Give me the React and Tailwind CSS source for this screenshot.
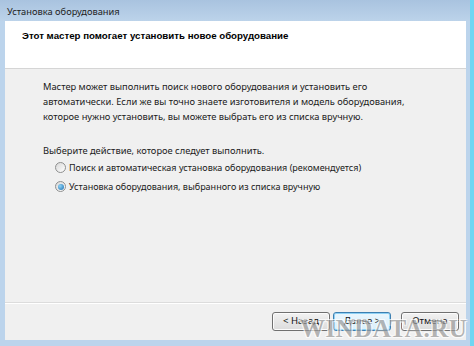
import React from "react";

function Radio({ checked }) {
  return (
    <span className="relative inline-flex h-[11px] w-[11px] shrink-0 items-center justify-center rounded-full border border-[#8e8f8f] bg-gradient-to-br from-[#d8d8d8] to-[#ffffff]">
      {checked && (
        <span className="h-[6px] w-[6px] rounded-full bg-[radial-gradient(circle_at_35%_35%,#8fd3f5,#1b6db0)]" />
      )}
    </span>
  );
}

function Btn({ children, focused }) {
  return (
    <div
      className={
        "flex h-[19px] w-[58px] items-center justify-center rounded-[3px] border text-[9.5px] text-[#111] bg-gradient-to-b " +
        (focused
          ? "border-[#3c7fb1] from-[#eaf6fd] to-[#d9f0fc] shadow-[inset_0_0_0_1px_#8ed1f5]"
          : "border-[#707070] from-[#f2f2f2] to-[#dcdcdc] shadow-[inset_0_0_0_1px_#fcfcfc]")
      }
    >
      {children}
    </div>
  );
}

export default function App() {
  return (
    <div
      className="relative h-[346px] w-[474px] overflow-hidden bg-[#bcd4ec]"
      style={{ fontFamily: '"Noto Sans", "Open Sans", sans-serif' }}
    >
      <div className="flex h-full">
        <div className="flex w-[470px] flex-col">
          {/* title bar */}
          <div className="flex h-[21px] items-center bg-gradient-to-b from-[#a9c3df] to-[#bcd3ea] pl-[7px] pt-[3px] text-[9.3px] text-[#1e1e1e]">
            Установка оборудования
          </div>
          <div className="flex flex-1 flex-col pl-[5px] pr-[4px] pb-[6px]">
            {/* header */}
            <div className="h-[48px] border-b border-[#d5d5d5] bg-white pl-[17px] pt-[8px]">
              <div
                className="text-[9.7px] font-bold text-black"
                style={{ fontFamily: '"Liberation Sans", Arial, sans-serif' }}
              >
                Этот мастер помогает установить новое оборудование
              </div>
            </div>
            {/* body */}
            <div className="flex flex-1 flex-col bg-[#f0f0f0] pl-[38px] pt-[10px] text-[9.3px] leading-[15px] text-[#1a1a1a]">
              <p>
                Мастер может выполнить поиск нового оборудования и установить его
                <br />
                автоматически. Если же вы точно знаете изготовителя и модель оборудования,
                <br />
                которое нужно установить, вы можете выбрать его из списка вручную.
              </p>
              <p className="mt-[19px]">Выберите действие, которое следует выполнить.</p>
              <div className="mt-[2px] flex flex-col gap-[4px] pl-[12px] text-[9px]">
                <label className="flex h-[15px] items-center gap-[3px]">
                  <Radio />
                  <span>Поиск и автоматическая установка оборудования (рекомендуется)</span>
                </label>
                <label className="flex h-[15px] items-center gap-[3px]">
                  <Radio checked />
                  <span>Установка оборудования, выбранного из списка вручную</span>
                </label>
              </div>
            </div>
            {/* footer */}
            <div className="flex h-[38px] items-center justify-end gap-[3px] border-t border-[#dcdcdc] bg-[#f0f0f0] pr-[7px] shadow-[inset_0_1px_0_#ffffff]">
              <Btn>&lt; Назад</Btn>
              <Btn focused>Далее &gt;</Btn>
              <div className="ml-[7px]">
                <Btn>Отмена</Btn>
              </div>
            </div>
          </div>
        </div>
        <div className="w-[4px] bg-[#6fd6f2]" />
      </div>
      {/* watermark */}
      <div
        className="pointer-events-none absolute left-[300px] top-[310px] text-[25px] font-bold tracking-[0.5px] text-[#9a9a9a] opacity-70"
        style={{
          fontFamily: '"Liberation Serif", serif',
          textShadow: "1px 1px 0 #fff, -1px -1px 0 #fff, 1px -1px 0 #fff, -1px 1px 0 #fff",
        }}
      >
        WINDATA.RU
      </div>
    </div>
  );
}
